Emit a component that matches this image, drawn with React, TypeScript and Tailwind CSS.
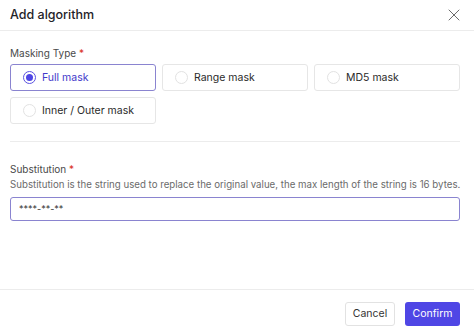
import { X } from 'lucide-react';

const options = [
  { name: 'Full mask', selected: true },
  { name: 'Range mask', selected: false },
  { name: 'MD5 mask', selected: false },
  { name: 'Inner / Outer mask', selected: false },
];

const App = () => {
  return (
    <div className="h-[335px] w-[474px] bg-white flex flex-col font-['Inter',sans-serif] text-[#1f2328]">
      {/* Header */}
      <div className="h-[31px] border-b border-[#ececec] pl-[10px] pr-[10px] flex items-center justify-between">
        <h2 className="text-[12.5px] font-medium">Add algorithm</h2>
        <X className="h-[20px] w-[20px] text-[#6b6b6b]" strokeWidth={1.2} />
      </div>

      {/* Body */}
      <div className="pl-[10px] pr-[14px] pt-[15px]">
        <p className="text-[10px] leading-[14px] text-[#4a4a4a] mb-[4px]">
          Masking Type <span className="text-[#d92d20]">*</span>
        </p>
        <div className="grid grid-cols-3 gap-[6px]">
          {options.map((opt) => (
            <div
              key={opt.name}
              className={
                opt.selected
                  ? 'h-[27px] rounded-[3px] border border-[#8a84d0] flex items-center pl-[12px] gap-[6px] text-[10.5px] text-[#4338ca]'
                  : 'h-[27px] rounded-[3px] border border-[#e6e6e6] flex items-center pl-[12px] gap-[6px] text-[10.5px] text-[#2a2a2a]'
              }
            >
              {opt.selected ? (
                <span className="h-[13px] w-[13px] rounded-full border border-[#5b53e0] flex items-center justify-center">
                  <span className="h-[7px] w-[7px] rounded-full bg-[#4f46e5]" />
                </span>
              ) : (
                <span className="h-[13px] w-[13px] rounded-full border border-[#e2e2e2]" />
              )}
              <span>{opt.name}</span>
            </div>
          ))}
        </div>

        <div className="border-t border-[#ececec] mt-[17px]" />

        <p className="mt-[20px] text-[10px] leading-[14px] text-[#4a4a4a]">
          Substitution <span className="text-[#d92d20]">*</span>
        </p>
        <p className="mt-[2px] text-[9.7px] leading-[14px] text-[#6b6b6b] whitespace-nowrap">
          Substitution is the string used to replace the original value, the max length of the string is 16 bytes.
        </p>
        <div className="mt-[5px] h-[24px] rounded-[3px] border-[1.5px] border-[#8a84d0] flex items-center px-[8px] text-[9px] text-[#333]">
          ****-**-**
        </div>
      </div>

      <div className="flex-1" />

      {/* Footer */}
      <div className="border-t border-[#ececec] pt-[12px] pb-[9px] pr-[14px] flex justify-end gap-[10px]">
        <button className="h-[24px] w-[50px] rounded-[3px] border border-[#e2e2e2] text-[10.5px] text-[#333] bg-white">
          Cancel
        </button>
        <button className="h-[24px] w-[55px] rounded-[3px] bg-[#4f46e5] text-[10.5px] text-white">
          Confirm
        </button>
      </div>
    </div>
  );
};

export default App;
